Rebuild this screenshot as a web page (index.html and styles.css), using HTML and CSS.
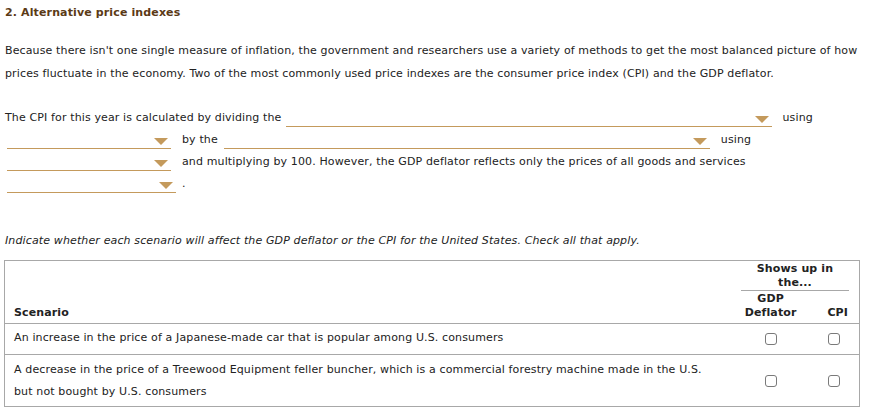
FILE: index.html
```html
<!DOCTYPE html>
<html>
<head>
<meta charset="utf-8">
<link rel="stylesheet" href="styles.css">
</head>
<body>
<div class="page">
  <h2 class="title">2. Alternative price indexes</h2>
  <p class="intro">Because there isn't one single measure of inflation, the government and researchers use a variety of methods to get the most balanced picture of how prices fluctuate in the economy. Two of the most commonly used price indexes are the consumer price index (CPI) and the GDP deflator.</p>

  <div class="fill">
    <div class="row">
      <span class="txt">The CPI for this year is calculated by dividing the</span>
      <span class="dd dd-long"><span class="arrow"></span></span>
      <span class="txt">using</span>
    </div>
    <div class="row">
      <span class="dd dd-short"><span class="arrow"></span></span>
      <span class="txt">by the</span>
      <span class="dd dd-long dd-mid"><span class="arrow"></span></span>
      <span class="txt">using</span>
    </div>
    <div class="row">
      <span class="dd dd-short"><span class="arrow"></span></span>
      <span class="txt">and multiplying by 100. However, the GDP deflator reflects only the prices of all goods and services</span>
    </div>
    <div class="row">
      <span class="dd dd-short2"><span class="arrow"></span></span>
      <span class="txt dot">.</span>
    </div>
  </div>

  <p class="instr">Indicate whether each scenario will affect the GDP deflator or the CPI for the United States. Check all that apply.</p>

  <table class="grid">
    <thead>
      <tr>
        <th class="scen" rowspan="2">Scenario</th>
        <th class="group" colspan="2"><span class="group-label">Shows up in the...</span></th>
      </tr>
      <tr>
        <th class="col gdp">GDP<br>Deflator</th>
        <th class="col cpi">CPI</th>
      </tr>
    </thead>
    <tbody>
      <tr class="r1">
        <td class="desc">An increase in the price of a Japanese-made car that is popular among U.S. consumers</td>
        <td class="chk chk-gdp"><span class="box"></span></td>
        <td class="chk chk-cpi"><span class="box"></span></td>
      </tr>
      <tr class="r2">
        <td class="desc">A decrease in the price of a Treewood Equipment feller buncher, which is a commercial forestry machine made in the U.S.<br>but not bought by U.S. consumers</td>
        <td class="chk chk-gdp"><span class="box"></span></td>
        <td class="chk chk-cpi"><span class="box"></span></td>
      </tr>
    </tbody>
  </table>
</div>
</body>
</html>
```

FILE: styles.css
```css
html, body {
  margin: 0;
  padding: 0;
  background: #ffffff;
}
body {
  font-family: "DejaVu Sans", Verdana, sans-serif;
  font-size: 11px;
  letter-spacing: 0.13px;
  color: #222222;
}
.page {
  padding: 5px 0 0 5px;
  width: 875px;
}
.title {
  margin: 0;
  font-size: 11px;
  font-weight: bold;
  color: #5b3a16;
  line-height: 16px;
}
.intro {
  margin: 18px 0 0 0;
  line-height: 23px;
  width: 870px;
}
.fill {
  margin-top: 22px;
}
.row {
  display: flex;
  align-items: flex-end;
  height: 22px;
}
.txt {
  line-height: 16px;
  padding-bottom: 3px;
  white-space: nowrap;
}
.dd {
  position: relative;
  display: inline-block;
  height: 14px;
  border-bottom: 1px solid #c49a5c;
  margin-bottom: 2px;
}
.dd-long {
  width: 486px;
  margin-left: 4px;
  margin-right: 11px;
}
.dd-mid {
  margin-left: 6px;
}
.dd-short {
  width: 164px;
  margin-left: 2px;
  margin-right: 11px;
}
.dd-short2 {
  width: 169px;
  margin-left: 2px;
  margin-right: 6px;
}
.arrow {
  position: absolute;
  right: 3px;
  top: 4px;
  width: 0;
  height: 0;
  border-left: 7px solid transparent;
  border-right: 7px solid transparent;
  border-top: 7px solid #c49a5c;
}
.instr {
  margin: 38px 0 0 0;
  font-style: italic;
  line-height: 16px;
}
.grid {
  margin-top: 11px;
  margin-left: -1px;
  width: 856px;
  border-collapse: collapse;
  border: 1px solid #a8a8a8;
  table-layout: fixed;
}
.grid th {
  font-weight: bold;
  color: #222222;
  line-height: 14px;
  padding: 0;
}
.scen {
  width: 727px;
  text-align: left;
  vertical-align: bottom;
  padding: 0 0 3px 9px !important;
  border-bottom: 1px solid #a8a8a8;
}
.group {
  text-align: left;
  vertical-align: top;
  padding: 1px 0 0 0 !important;
}
.group-label {
  display: block;
  width: 108px;
  text-align: center;
  border-bottom: 1px solid #a8a8a8;
  padding-bottom: 0;
}
.col {
  border-bottom: 1px solid #a8a8a8;
  vertical-align: bottom;
  padding: 1px 0 3px 0 !important;
}
.gdp {
  width: 62px;
  text-align: center;
}
.cpi {
  text-align: right;
  padding-right: 11px !important;
}
.desc {
  line-height: 16px;
  padding: 6px 0 8px 9px;
  border-bottom: 1px solid #a8a8a8;
}
.r2 .desc {
  line-height: 22px;
  padding: 4px 0 3px 9px;
}
.chk {
  vertical-align: middle;
  border-bottom: 1px solid #a8a8a8;
  padding: 0;
  line-height: 0;
}
.chk-gdp {
  text-align: center;
}
.chk-cpi {
  text-align: left;
  padding-left: 28px;
}
.box {
  display: inline-block;
  width: 10px;
  height: 10px;
  border: 1px solid #7a7a7a;
  border-radius: 3px;
}
```
